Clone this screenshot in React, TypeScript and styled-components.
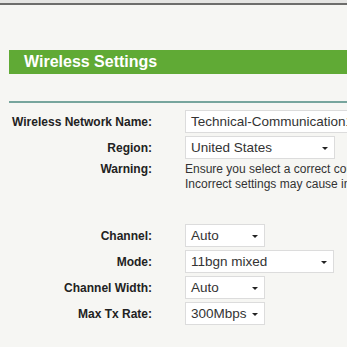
import styled, { createGlobalStyle } from 'styled-components';

const GlobalStyle = createGlobalStyle`
  html, body {
    margin: 0;
    padding: 0;
    background: #f6f6f3;
    overflow: hidden;
  }
  body {
    font-family: 'Liberation Sans', Arial, sans-serif;
  }
`;

const Page = styled.div`
  width: 347px;
  height: 347px;
  overflow: hidden;
  background: #f6f6f3;
  border-top: 3px solid #e4e4e2;
`;

const TopRule = styled.div`
  height: 2px;
  background: #6d6d6b;
`;

const Content = styled.div`
  padding-left: 9px;
`;

const TitleBar = styled.h1`
  margin: 45px 0 0;
  height: 24px;
  line-height: 24px;
  padding-left: 15px;
  background: #60aa35;
  color: #fff;
  font-size: 16px;
  font-weight: bold;
`;

const Divider = styled.div`
  margin-top: 27px;
  height: 2px;
  background: #77a59d;
`;

const Form = styled.div`
  margin-top: 7px;
  display: flex;
  flex-direction: column;
  gap: 3px;
`;

type RowProps = { $align?: string; $gapBefore?: number };
const Row = styled.div<RowProps>`
  display: flex;
  align-items: ${(p) => p.$align || 'center'};
  margin-top: ${(p) => p.$gapBefore || 0}px;
`;

type LabelProps = { $lineHeight?: number };
const Label = styled.div<LabelProps>`
  width: 143px;
  flex: none;
  text-align: right;
  font-size: 12px;
  font-weight: bold;
  color: #222;
  white-space: nowrap;
  line-height: ${(p) => (p.$lineHeight ? `${p.$lineHeight}px` : 'normal')};
`;

const Value = styled.div`
  margin-left: 33px;
  flex: none;
`;

type BoxProps = { $width: number };
const Box = styled.div<BoxProps>`
  position: relative;
  box-sizing: border-box;
  width: ${(p) => p.$width}px;
  height: 23px;
  padding-left: 5px;
  background: #fff;
  border: 1px solid #dcdcdc;
  font-size: 13.5px;
  line-height: 21px;
  color: #333;
  white-space: nowrap;
  overflow: hidden;
`;

const Caret = styled.span`
  position: absolute;
  right: 6px;
  top: 10px;
  width: 0;
  height: 0;
  border-left: 3px solid transparent;
  border-right: 3px solid transparent;
  border-top: 3px solid #222;
`;

const Note = styled.div`
  font-size: 12px;
  line-height: 15px;
  color: #333;
  white-space: nowrap;
`;

function Select({ width, value }: { width: number; value: string }) {
  return (
    <Box $width={width}>
      {value}
      <Caret />
    </Box>
  );
}

export default function App() {
  return (
    <Page>
      <GlobalStyle />
      <TopRule />
      <Content>
        <TitleBar>Wireless Settings</TitleBar>
        <Divider />
        <Form>
          <Row>
            <Label>Wireless Network Name:</Label>
            <Value>
              <Box $width={200}>Technical-Communication1</Box>
            </Value>
          </Row>
          <Row>
            <Label>Region:</Label>
            <Value>
              <Select width={150} value='United States' />
            </Value>
          </Row>
          <Row $align='flex-start'>
            <Label $lineHeight={15}>Warning:</Label>
            <Value>
              <Note>Ensure you select a correct country to conform local law.</Note>
              <Note>Incorrect settings may cause interference.</Note>
            </Value>
          </Row>
          <Row $gapBefore={29}>
            <Label>Channel:</Label>
            <Value>
              <Select width={80} value='Auto' />
            </Value>
          </Row>
          <Row>
            <Label>Mode:</Label>
            <Value>
              <Select width={149} value='11bgn mixed' />
            </Value>
          </Row>
          <Row>
            <Label>Channel Width:</Label>
            <Value>
              <Select width={80} value='Auto' />
            </Value>
          </Row>
          <Row>
            <Label>Max Tx Rate:</Label>
            <Value>
              <Select width={80} value='300Mbps' />
            </Value>
          </Row>
        </Form>
      </Content>
    </Page>
  );
}
